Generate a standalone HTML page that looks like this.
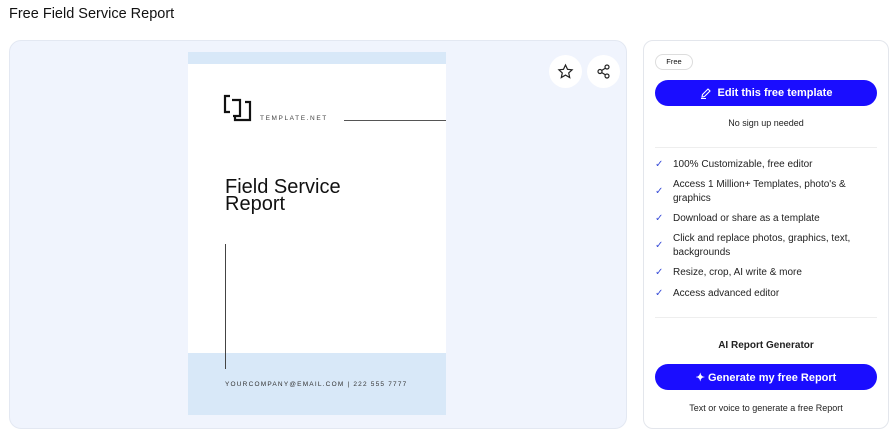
<!DOCTYPE html>
<html><head><style>
*{box-sizing:border-box;margin:0;padding:0}
body{width:895px;height:432px;background:#fff;font-family:"Liberation Sans",sans-serif;position:relative;overflow:hidden;color:#111}
.t{position:absolute;left:9px;top:6px;font-size:14.5px;color:#111}
.prev{position:absolute;left:9px;top:40px;width:618px;height:389px;background:#f0f4fd;border:1px solid #e3e8f2;border-radius:12px}
.doc{position:absolute;left:188px;top:52px;width:258px;height:363px;background:#fff}
.circ{position:absolute;top:55px;width:33px;height:33px;border-radius:50%;background:#fff}
.side{position:absolute;left:643px;top:40px;width:246px;height:389px;border:1px solid #e3e6ec;border-radius:10px;background:#fff}
.btn{position:absolute;left:11px;width:222px;height:26px;border-radius:13px;background:#1a0dff;color:#fff;font-size:11px;font-weight:bold;display:flex;align-items:center;justify-content:center;gap:6px}
.sm{position:absolute;left:0;width:100%;text-align:center;font-size:9px;color:#222}
.li{position:absolute;left:11px;font-size:10px;color:#222;line-height:14px}
.li:before{content:"✓";position:absolute;left:0;color:#3b4fd8}
.li span{display:block;margin-left:18px}
</style></head><body>
<div class="t">Free Field Service Report</div>
<div class="prev"></div>
<div class="doc">
 <div style="height:12px;background:#d8e8f8"></div>
 <svg style="position:absolute;left:35px;top:42px" width="30" height="28" viewBox="0 0 30 28" fill="none" stroke="#111" stroke-width="2.2"><path d="M7 2H2V18H7"/><path d="M9 6H17V22H10"/><path d="M22 8H27V26H12V22"/></svg>
 <div style="position:absolute;left:72px;top:63px;font-size:6.5px;letter-spacing:1.6px;color:#444">TEMPLATE.NET</div>
 <div style="position:absolute;left:156px;top:68px;width:102px;height:1px;background:#555"></div>
 <div style="position:absolute;left:37px;top:127px;font-size:20px;line-height:17px;color:#111">Field Service<br>Report</div>
 <div style="position:absolute;left:0;top:301px;width:258px;height:62px;background:#d8e8f8"></div>
 <div style="position:absolute;left:37px;top:192px;width:1px;height:125px;background:#444"></div>
 <div style="position:absolute;left:37px;top:329px;font-size:6.5px;letter-spacing:1.2px;color:#333">YOURCOMPANY@EMAIL.COM | 222 555 7777</div>
</div>
<div class="circ" style="left:549px"><svg width="33" height="33" viewBox="0 0 33 33"><path d="M16.5 10l2 4.3 4.6.5-3.4 3.1 1 4.6-4.2-2.4-4.2 2.4 1-4.6-3.4-3.1 4.6-.5z" fill="none" stroke="#222" stroke-width="1.2"/></svg></div>
<div class="circ" style="left:587px"><svg width="33" height="33" viewBox="0 0 33 33" fill="none" stroke="#222" stroke-width="1.2"><circle cx="20" cy="12" r="2"/><circle cx="13" cy="16.5" r="2"/><circle cx="20" cy="21" r="2"/><path d="M14.8 15.4l3.5-2.2M14.8 17.6l3.5 2.2"/></svg></div>
<div class="side">
 <div style="position:absolute;left:11px;top:13px;width:38px;height:16px;border:1px solid #ddd;border-radius:8px;font-size:7.5px;text-align:center;line-height:14px">Free</div>
 <div class="btn" style="top:39px"><svg width="12" height="12" viewBox="0 0 12 12" fill="none" stroke="#fff" stroke-width="1.1"><path d="M2 10l.5-2.5L8 2l2 2-5.5 5.5zM1 11.5h5"/></svg>Edit this free template</div>
 <div class="sm" style="top:77px">No sign up needed</div>
 <div style="position:absolute;left:11px;top:106px;width:222px;height:1px;background:#eee"></div>
 <div class="li" style="top:117px"><span>100% Customizable, free editor</span></div>
 <div class="li" style="top:137px;padding-top:7px"><span style="margin-top:-7px">Access 1 Million+ Templates, photo's &amp;<br>graphics</span></div>
 <div class="li" style="top:171px"><span>Download or share as a template</span></div>
 <div class="li" style="top:191px;padding-top:7px"><span style="margin-top:-7px">Click and replace photos, graphics, text,<br>backgrounds</span></div>
 <div class="li" style="top:225px"><span>Resize, crop, AI write &amp; more</span></div>
 <div class="li" style="top:246px"><span>Access advanced editor</span></div>
 <div style="position:absolute;left:11px;top:276px;width:222px;height:1px;background:#eee"></div>
 <div class="sm" style="top:299px;font-size:10px;font-weight:bold">AI Report Generator</div>
 <div class="btn" style="top:323px">✦ Generate my free Report</div>
 <div class="sm" style="top:362px">Text or voice to generate a free Report</div>
</div>
</body></html>
